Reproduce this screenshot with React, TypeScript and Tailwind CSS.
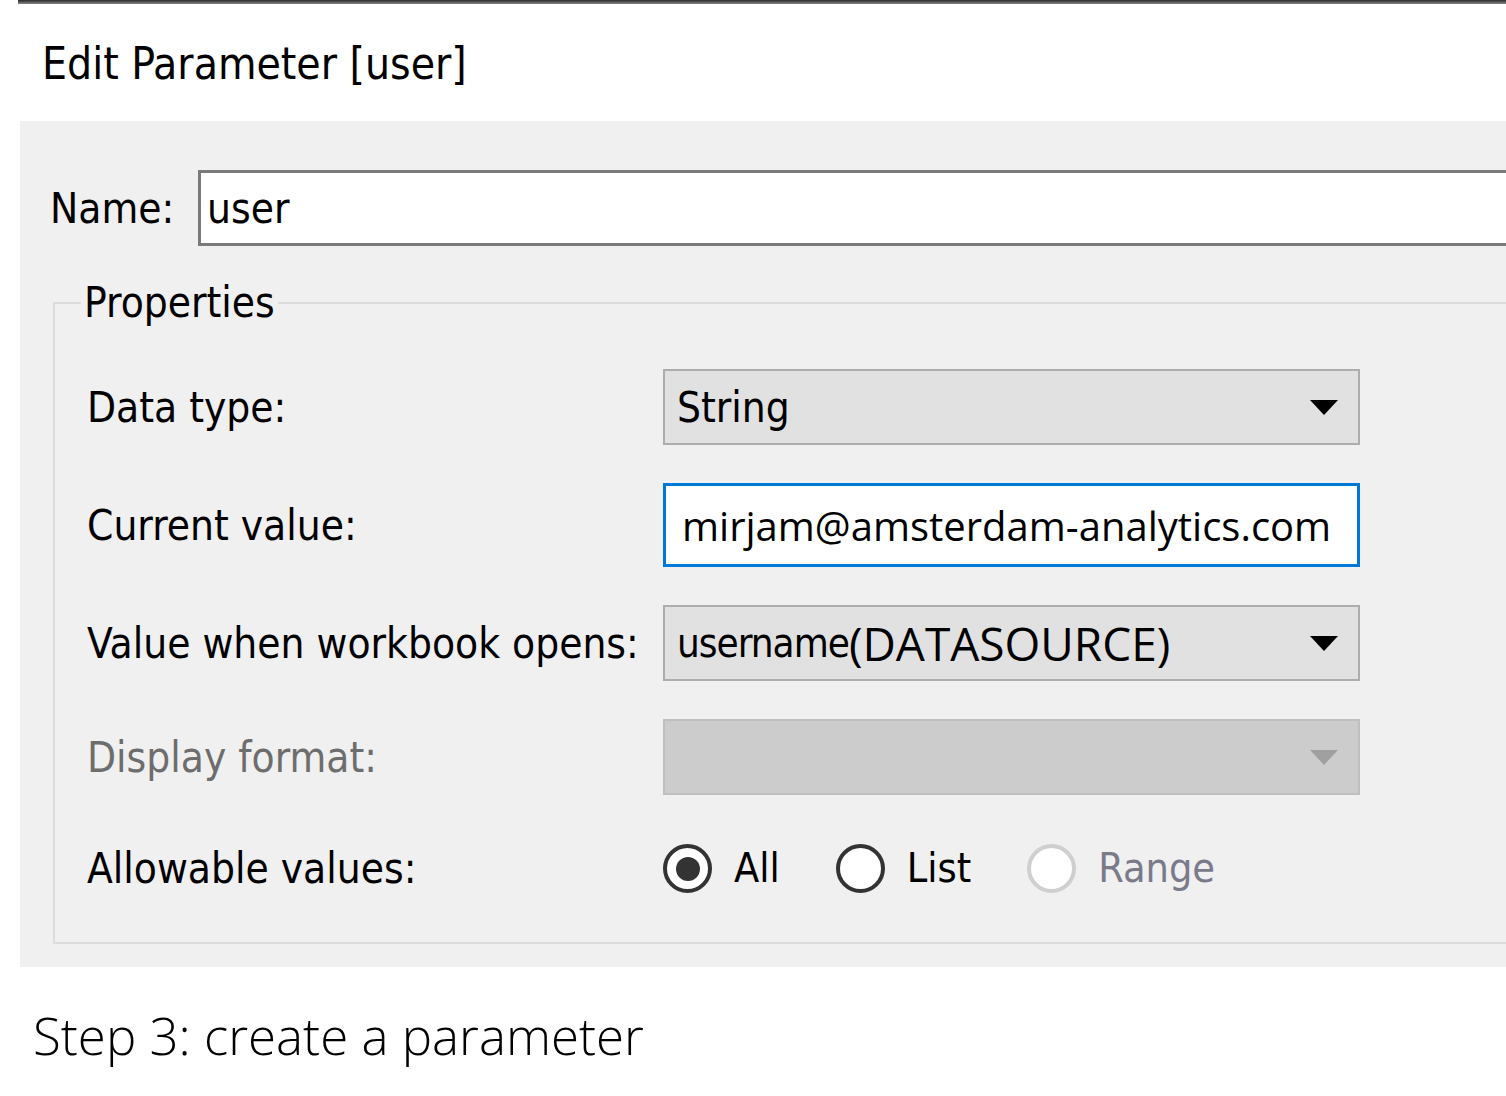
import { useState } from 'react';

const tahoma = { fontFamily: '"DejaVu Sans Condensed", "DejaVu Sans", sans-serif' };
const calibri = { fontFamily: '"Open Sans", "Noto Sans", sans-serif' };

function Arrow({ disabled }: { disabled?: boolean }) {
  return (
    <svg width="28" height="15" viewBox="0 0 28 15" className="shrink-0">
      <polygon points="0,0 28,0 14,15" fill={disabled ? '#a0a0a0' : '#000'} />
    </svg>
  );
}

function Radio({ checked, disabled, label }: { checked?: boolean; disabled?: boolean; label: string }) {
  return (
    <label className="flex items-center gap-[22px]">
      <span
        className={`flex h-[49px] w-[49px] items-center justify-center rounded-full border-[4px] bg-white ${
          disabled ? 'border-[#cfcfcf]' : 'border-[#333333]'
        }`}
      >
        {checked && <span className="h-[24px] w-[24px] rounded-full bg-[#333333]" />}
      </span>
      <span className={`text-[41px] ${disabled ? 'text-[#7a7a8a]' : 'text-black'}`} style={tahoma}>
        {label}
      </span>
    </label>
  );
}

function Row({ label, disabled, children }: { label: string; disabled?: boolean; children: React.ReactNode }) {
  return (
    <div className="flex items-center">
      <div className={`w-[576px] shrink-0 text-[42px] ${disabled ? 'text-[#6d6d6d]' : 'text-black'}`} style={tahoma}>
        {label}
      </div>
      {children}
    </div>
  );
}

export default function App() {
  const [value, setValue] = useState('mirjam@amsterdam-analytics.com');
  const [allow, setAllow] = useState('All');

  return (
    <div className="h-[1096px] w-[1506px] overflow-hidden bg-white">
      <div className="ml-[18px] h-[4px] bg-gradient-to-b from-[#2a2a2a] to-[#8a8a8a]" />
      <h1 className="ml-[42px] mt-[30px] text-[44px] leading-[60px] text-black" style={tahoma}>
        Edit Parameter [user]
      </h1>

      <div className="ml-[20px] mt-[27px] h-[846px] bg-[#f0f0f0] pt-[49px]">
        <div className="flex items-center pl-[30px]">
          <span className="w-[148px] shrink-0 text-[42px]" style={tahoma}>
            Name:
          </span>
          <div className="-mr-[40px] flex h-[76px] flex-1 items-center border-[3px] border-[#7a7a7a] bg-white px-[6px]">
            <span className="text-[42px]" style={tahoma}>user</span>
          </div>
        </div>

        <fieldset className="-mr-[40px] ml-[33px] mt-[32px] h-[666px] border-2 border-[#dcdcdc] pl-[26px] pt-[41px]">
          <legend className="px-[3px] text-[42px] leading-[50px]" style={tahoma}>
            Properties
          </legend>

          <div className="flex flex-col gap-[38px] pl-[6px]">
            <Row label="Data type:">
              <div className="flex h-[76px] w-[697px] items-center justify-between border-2 border-[#adadad] bg-[#e1e1e1] pl-[12px] pr-[20px]">
                <span className="text-[42px]" style={tahoma}>String</span>
                <Arrow />
              </div>
            </Row>

            <Row label="Current value:">
              <input
                value={value}
                onChange={(e) => setValue(e.target.value)}
                className="h-[84px] w-[697px] border-[3px] border-[#0078d7] bg-white pl-[16px] text-[40px] text-black outline-none"
                style={calibri}
              />
            </Row>

            <Row label="Value when workbook opens:">
              <div className="flex h-[76px] w-[697px] items-center justify-between border-2 border-[#adadad] bg-[#e1e1e1] pl-[12px] pr-[20px]">
                <span className="flex items-center">
                  <span className="text-[40px] tracking-[-1px]" style={tahoma}>username</span>
                  <span className="text-[46px]" style={calibri}>(DATASOURCE)</span>
                </span>
                <Arrow />
              </div>
            </Row>

            <Row label="Display format:" disabled>
              <div className="flex h-[76px] w-[697px] items-center justify-end border-2 border-[#bfbfbf] bg-[#cccccc] pr-[20px]">
                <Arrow disabled />
              </div>
            </Row>

            <div className="mt-[4px]">
              <Row label="Allowable values:">
                <div className="flex items-center gap-[56px]">
                  <span onClick={() => setAllow('All')}>
                    <Radio label="All" checked={allow === 'All'} />
                  </span>
                  <span onClick={() => setAllow('List')}>
                    <Radio label="List" checked={allow === 'List'} />
                  </span>
                  <Radio label="Range" disabled />
                </div>
              </Row>
            </div>
          </div>
        </fieldset>
      </div>

      <p className="ml-[33px] mt-[30px] text-[51px] font-light text-black" style={{ fontFamily: '"Open Sans", Lato, sans-serif' }}>
        Step 3: create a parameter
      </p>
    </div>
  );
}
